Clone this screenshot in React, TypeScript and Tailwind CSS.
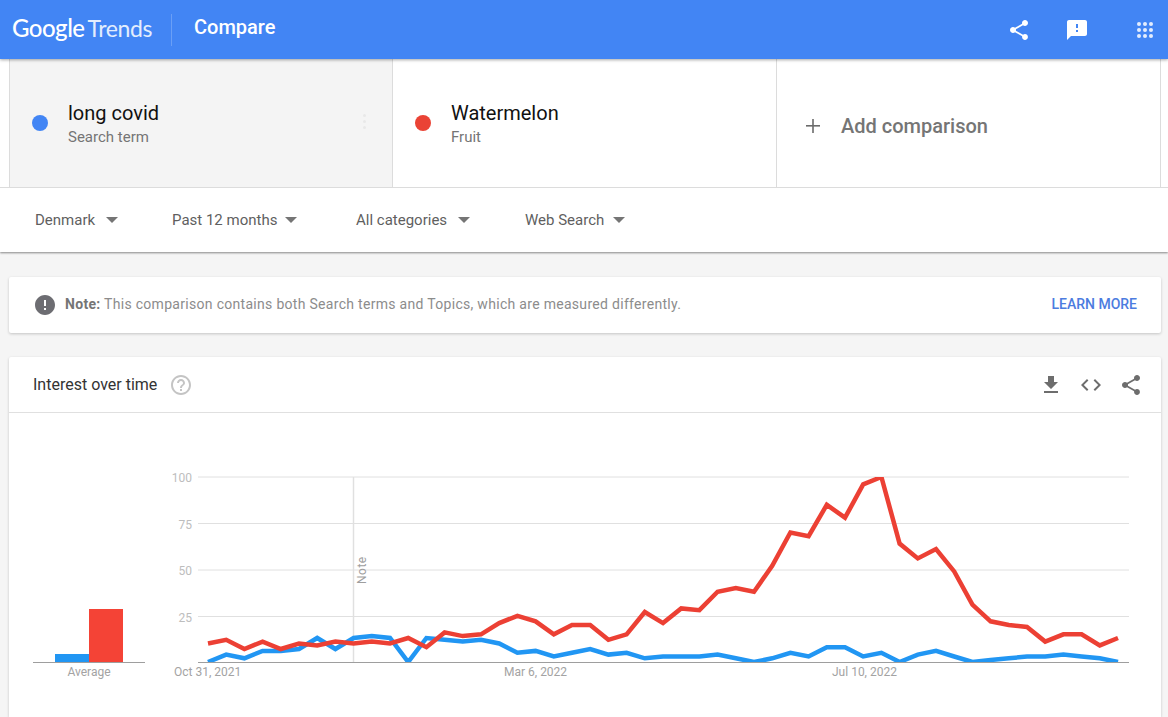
const roboto = "font-['Roboto',sans-serif]";

const red = [10, 12, 7, 11, 7, 10, 9, 11, 10, 11, 10, 13, 8, 16, 14, 15, 21, 25, 22, 15, 20, 20, 12, 15, 27, 21, 29, 28, 38, 40, 38, 52, 70, 68, 85, 78, 96, 100, 64, 56, 61, 49, 31, 22, 20, 19, 11, 15, 15, 9, 13];
const blue = [0, 4, 2, 6, 6, 7, 13, 7, 13, 14, 13, 0, 13, 12, 11, 12, 10, 5, 6, 3, 5, 7, 4, 5, 2, 3, 3, 3, 4, 2, 0, 2, 5, 3, 8, 8, 3, 5, 0, 4, 6, 3, 0, 1, 2, 3, 3, 4, 3, 2, 0];

const toPoints = (values: number[]) =>
  values.map((v, i) => `${(208 + i * 18.2).toFixed(1)},${(662 - v * 1.85).toFixed(1)}`).join(" ");

const paths = {
  share: "M18 16.08c-.76 0-1.44.3-1.96.77L8.91 12.7c.05-.23.09-.46.09-.7s-.04-.47-.09-.7l7.05-4.11c.54.5 1.25.81 2.04.81 1.66 0 3-1.34 3-3s-1.34-3-3-3-3 1.34-3 3c0 .24.04.47.09.7L8.04 9.81C7.5 9.31 6.79 9 6 9c-1.66 0-3 1.34-3 3s1.34 3 3 3c.79 0 1.5-.31 2.04-.81l7.12 4.16c-.05.21-.08.43-.08.65 0 1.61 1.31 2.92 2.92 2.92s2.92-1.31 2.92-2.92-1.31-2.92-2.92-2.92z",
  feedback: "M20 2H4c-1.1 0-1.99.9-1.99 2L2 22l4-4h14c1.1 0 2-.9 2-2V4c0-1.1-.9-2-2-2zm-7 12h-2v-2h2v2zm0-4h-2V6h2v4z",
  download: "M19 9h-4V3H9v6H5l7 7 7-7zM5 18v2h14v-2H5z",
  code: "M9.4 16.6L4.8 12l4.6-4.6L8 6l-6 6 6 6 1.4-1.4zm5.2 0l4.6-4.6-4.6-4.6L16 6l6 6-6 6-1.4-1.4z",
  error: "M12 2C6.48 2 2 6.48 2 12s4.48 10 10 10 10-4.48 10-10S17.52 2 12 2zm1 15h-2v-2h2v2zm0-4h-2V7h2v6z",
  help: "M11 18h2v-2h-2v2zm1-16C6.48 2 2 6.48 2 12s4.48 10 10 10 10-4.48 10-10S17.52 2 12 2zm0 18c-4.41 0-8-3.59-8-8s3.59-8 8-8 8 3.59 8 8-3.59 8-8 8zm0-14c-2.21 0-4 1.79-4 4h2c0-1.1.9-2 2-2s2 .9 2 2c0 2-3 1.75-3 5h2c0-2.25 3-2.5 3-5 0-2.21-1.79-4-4-4z",
};

function Icon({ d, className }: { d: string; className: string }) {
  return (
    <svg viewBox="0 0 24 24" fill="currentColor" className={className}>
      <path d={d} />
    </svg>
  );
}

function AppsIcon() {
  const dots = [4, 10, 16];
  return (
    <svg viewBox="0 0 20 20" fill="currentColor" className="w-5 h-5 text-[#e3edfd]">
      {dots.map((y) => dots.map((x) => <circle key={`${x}-${y}`} cx={x} cy={y} r="2" />))}
    </svg>
  );
}

function Term({ color, name, type, width, active }: { color: string; name: string; type: string; width: string; active?: boolean }) {
  return (
    <div className={`h-full flex items-center border-r border-[#dcdcdc] relative ${width} ${active ? "bg-[#f4f4f4]" : "bg-white"}`}>
      <div className={`w-4 h-4 rounded-full ml-[22px] ${color}`} />
      <div className="ml-5">
        <div className="text-[20px] leading-6 text-[#111]">{name}</div>
        <div className="text-[15px] leading-[18px] text-[#757575] mt-[3px]">{type}</div>
      </div>
      {active && (
        <div className="absolute left-[353px] top-[55px] flex flex-col gap-[3px]">
          <div className="w-[3px] h-[3px] rounded-full bg-[#e8e8e8]" />
          <div className="w-[3px] h-[3px] rounded-full bg-[#e8e8e8]" />
          <div className="w-[3px] h-[3px] rounded-full bg-[#e8e8e8]" />
        </div>
      )}
    </div>
  );
}

function Filter({ label, className, caret }: { label: string; className: string; caret: string }) {
  return (
    <div className={`flex items-center text-[15px] text-[#5f5f5f] ${className}`}>
      <span>{label}</span>
      <div className={`w-0 h-0 border-l-[6px] border-r-[6px] border-t-[6px] border-l-transparent border-r-transparent border-t-[#757575] ${caret}`} />
    </div>
  );
}

function Chart() {
  const grid = [477, 523.5, 570, 616.5];
  const labels = ["100", "75", "50", "25"];
  return (
    <svg viewBox="9 413 1152 304" className="w-[1152px] h-[304px] block">
      <defs>
        <clipPath id="plot">
          <rect x="198" y="477" width="931" height="186" />
        </clipPath>
      </defs>
      {grid.map((y, i) => (
        <g key={y}>
          <line x1="198" x2="1129" y1={y} y2={y} stroke="#e0e0e0" strokeWidth="1" />
          <text x="192" y={y + 5} textAnchor="end" fontSize="12" fill="#bdbdbd" fontFamily="Roboto">
            {labels[i]}
          </text>
        </g>
      ))}
      <line x1="353.5" x2="353.5" y1="477" y2="662" stroke="#e0e0e0" strokeWidth="1.5" />
      <text transform="translate(366 584) rotate(-90)" fontSize="12" letterSpacing="0.5" fill="#9e9e9e" fontFamily="Roboto">
        Note
      </text>
      <g clipPath="url(#plot)">
        <polyline points={toPoints(blue)} fill="none" stroke="#2196f3" strokeWidth="4.5" strokeLinejoin="miter" />
        <polyline points={toPoints(red)} fill="none" stroke="#ec4034" strokeWidth="4.5" strokeLinejoin="miter" />
      </g>
      <line x1="198" x2="1129" y1="662.5" y2="662.5" stroke="#9e9e9e" strokeWidth="1" />
      <line x1="33" x2="145" y1="662.5" y2="662.5" stroke="#9e9e9e" strokeWidth="1" />
      <rect x="55" y="654" width="34" height="8" fill="#2196f3" />
      <rect x="89" y="609" width="34" height="53" fill="#f44336" />
      <g fontSize="12" fill="#a3a3a3" fontFamily="Roboto">
        <text x="89" y="676" textAnchor="middle">Average</text>
        <text x="174" y="676">Oct 31, 2021</text>
        <text x="504" y="676">Mar 6, 2022</text>
        <text x="832" y="676">Jul 10, 2022</text>
      </g>
    </svg>
  );
}

export default function App() {
  return (
    <div className={`w-[1168px] h-[717px] overflow-hidden bg-[#f5f5f5] ${roboto}`}>
      <header className="relative z-10 h-[59px] bg-[#4285f4] flex items-center text-white shadow-[0_1px_3px_rgba(0,0,0,0.35)]">
        <div className="ml-3 -mt-[3px] flex items-baseline w-[142px] font-['Lato',sans-serif] text-[24px]">
          <span className="font-medium tracking-[-0.5px]">Google</span>
          <span className="ml-[3px] font-normal text-[#e3edfd] text-[23px] tracking-[-0.4px]">Trends</span>
        </div>
        <div className="ml-[17px] w-px h-8 bg-[#6a9ff6]" />
        <div className="ml-[22px] text-[20px] font-medium -mt-[6px]">Compare</div>
        <div className="ml-auto flex items-center">
          <Icon d={paths.share} className="w-6 h-6" />
          <Icon d={paths.feedback} className="w-6 h-6 ml-[34px]" />
          <div className="ml-[46px] mr-[13px]">
            <AppsIcon />
          </div>
        </div>
      </header>

      <div className="bg-white shadow-[0_1px_2px_rgba(0,0,0,0.45)]">
        <div className="h-[129px] border-b border-[#dcdcdc] pl-[9px] flex">
          <div className="h-full border-l border-[#dcdcdc]" />
          <Term color="bg-[#4285f4]" name="long covid" type="Search term" width="w-[383px]" active />
          <Term color="bg-[#ea4335]" name="Watermelon" type="Fruit" width="w-[384px]" />
          <div className="w-[384px] h-full flex items-center border-r border-[#dcdcdc] pt-[5px]">
            <svg viewBox="0 0 16 16" className="w-4 h-4 ml-[28px] text-[#6b6b6b]" fill="currentColor">
              <rect x="1" y="7" width="14" height="1.6" />
              <rect x="7.2" y="1" width="1.6" height="14" />
            </svg>
            <span className="ml-5 text-[20px] font-medium text-[#757575]">Add comparison</span>
          </div>
        </div>
        <div className="h-16 flex items-center pl-[35px]">
          <Filter label="Denmark" className="w-[137px]" caret="ml-[11px]" />
          <Filter label="Past 12 months" className="w-[184px]" caret="ml-2" />
          <Filter label="All categories" className="w-[169px]" caret="ml-[11px]" />
          <Filter label="Web Search" className="" caret="ml-[9px]" />
        </div>
      </div>

      <div className="mx-[9px] mt-[25px] w-[1152px] h-14 bg-white rounded-[2px] shadow-[0_1px_3px_rgba(0,0,0,0.2)] flex items-center">
        <Icon d={paths.error} className="w-6 h-6 ml-[24px] text-[#6d6d72]" />
        <div className="ml-[8px] -mt-px text-[14px] tracking-[0.3px] text-[#8c8c8c]">
          <span className="font-bold text-[#757575]">Note:</span> This comparison contains both Search terms and Topics, which are measured differently.
        </div>
        <div className="ml-auto mr-6 -mt-px text-[14px] font-medium text-[#4c7ce0]">LEARN MORE</div>
      </div>

      <div className="mx-[9px] mt-6 w-[1152px] bg-white rounded-t-[2px] shadow-[0_1px_3px_rgba(0,0,0,0.2)]">
        <div className="h-[56px] border-b border-[#e0e0e0] flex items-center">
          <span className="ml-6 text-[16px] text-[#333]">Interest over time</span>
          <Icon d={paths.help} className="w-6 h-6 ml-[12px] text-[#c4c4c4]" />
          <div className="ml-auto flex items-center text-[#6d6d6d] mr-[18px]">
            <Icon d={paths.download} className="w-6 h-6" />
            <Icon d={paths.code} className="w-6 h-6 ml-4" />
            <Icon d={paths.share} className="w-6 h-6 ml-4" />
          </div>
        </div>
        <Chart />
      </div>
    </div>
  );
}
